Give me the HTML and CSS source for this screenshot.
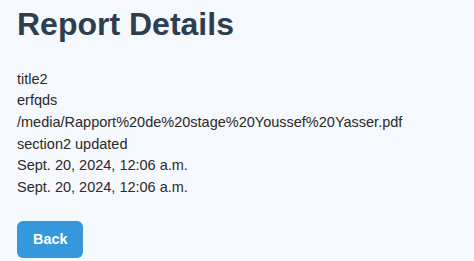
FILE: index.html
```html
<!DOCTYPE html>
<html lang="en">
<head>
<meta charset="utf-8">
<title>Report Details</title>
<link rel="stylesheet" href="styles.css">
</head>
<body>
<main class="page">
  <h1 class="title">Report Details</h1>
  <div class="details">
    <p class="field">title2</p>
    <p class="field">erfqds</p>
    <p class="field">/media/Rapport%20de%20stage%20Youssef%20Yasser.pdf</p>
    <p class="field">section2 updated</p>
    <p class="field">Sept. 20, 2024, 12:06 a.m.</p>
    <p class="field">Sept. 20, 2024, 12:06 a.m.</p>
  </div>
  <a class="back-btn" href="#">Back</a>
</main>
</body>
</html>
```

FILE: styles.css
```css
html, body {
  margin: 0;
  padding: 0;
  background: #f5f8fc;
}
body {
  font-family: "Liberation Sans", Arial, sans-serif;
  color: #2a2a2a;
}
.page {
  padding: 6px 17px 0;
  display: flex;
  flex-direction: column;
  align-items: flex-start;
}
.title {
  margin: 0;
  font-size: 32px;
  font-weight: bold;
  color: #2c3e50;
  line-height: 36.8px;
}
.details {
  margin-top: 26px;
}
.field {
  margin: 0;
  font-size: 14.5px;
  line-height: 21.6px;
}
.back-btn {
  margin-top: 23px;
  display: inline-block;
  padding: 10px 16px;
  background: #3498db;
  color: #fff;
  font-weight: bold;
  font-size: 14.4px;
  line-height: 17px;
  border-radius: 6px;
  text-decoration: none;
}
```
